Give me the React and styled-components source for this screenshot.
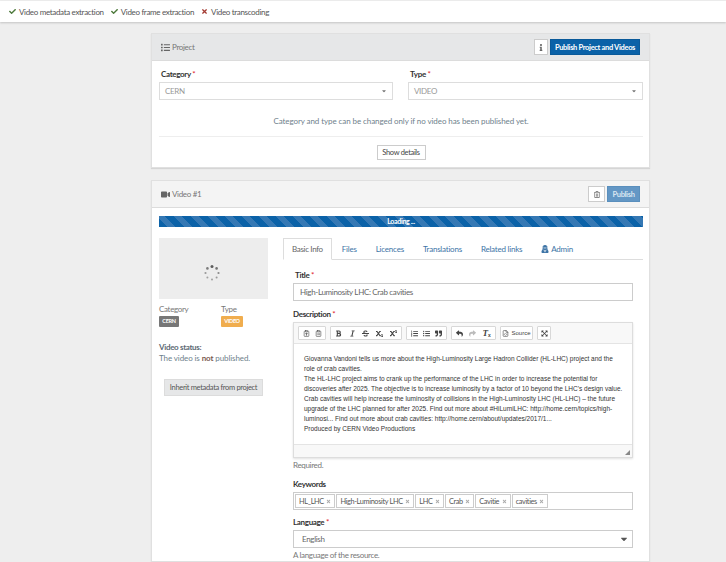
import styled, { createGlobalStyle } from "styled-components";
import {
  FaCheck,
  FaTimes,
  FaList,
  FaVideo,
  FaInfo,
  FaRegTrashAlt,
  FaUserSecret,
  FaCaretDown,
  FaBold,
  FaItalic,
  FaStrikethrough,
  FaSubscript,
  FaSuperscript,
  FaListOl,
  FaListUl,
  FaQuoteRight,
  FaReply,
  FaShare,
  FaExpandArrowsAlt,
} from "react-icons/fa";
import { ClipboardType, ClipboardList, FileCode } from "lucide-react";

const GlobalStyle = createGlobalStyle`
  html, body {
    margin: 0;
    height: 562px;
    overflow: hidden;
    background: #eeeeee;
    font-family: Lato, "Open Sans", sans-serif;
    font-size: 8px;
    letter-spacing: -0.33px;
    color: #555;
  }
  button {
    font-family: inherit;
    letter-spacing: inherit;
  }
`;

const TopBar = styled.div`
  margin-top: 1px;
  height: 21px;
  background: #fff;
  box-shadow: 0 1px 2px rgba(0, 0, 0, 0.18);
  display: flex;
  align-items: center;
  padding-left: 9px;
  gap: 7px;
`;

const Status = styled.span`
  display: inline-flex;
  align-items: center;
  gap: 3px;
  color: #555;
  svg {
    width: 7px;
    height: 7px;
    color: ${(p) => (p.$ok ? "#4d7a3c" : "#a33a32")};
  }
`;

const Page = styled.div`
  margin: 11px 0 0 151px;
  width: 499px;
  display: flex;
  flex-direction: column;
  gap: 12px;
`;

const Panel = styled.section`
  background: #fff;
  border: 1px solid #e0e0e0;
  box-shadow: 0 1px 1px rgba(0, 0, 0, 0.1);
`;

const PanelHead = styled.header`
  height: 26px;
  padding: 0 9px;
  background: ${(p) => (p.$light ? "#f4f4f4" : "#e6e7e8")};
  border-bottom: 1px solid #dcdcdc;
  display: flex;
  align-items: center;
  justify-content: space-between;
`;

const HeadTitle = styled.div`
  display: flex;
  align-items: center;
  gap: 2px;
  color: #777;
  svg {
    width: 9px;
    height: 9px;
    color: #666;
  }
`;

const HeadActions = styled.div`
  display: flex;
  align-items: center;
  gap: 2px;
`;

const IconButton = styled.button`
  width: ${(p) => p.$w}px;
  height: 16px;
  padding: 0;
  background: #fff;
  border: 1px solid #ccc;
  display: flex;
  align-items: center;
  justify-content: center;
  color: #666;
  svg {
    width: 6px;
    height: 7px;
  }
`;

const PrimaryButton = styled.button`
  width: ${(p) => p.$w}px;
  height: 16px;
  padding: 0;
  background: ${(p) => (p.$faded ? "#6397c5" : "#0b62a8")};
  border: 1px solid ${(p) => (p.$faded ? "#5a8fbd" : "#0a5a9a")};
  color: ${(p) => (p.$faded ? "#d9e6f1" : "#fff")};
  font-size: 7.5px;
  font-weight: 700;
  white-space: nowrap;
`;

const ProjectBody = styled.div`
  padding: 7px 6px 7px 7px;
`;

const FieldGrid = styled.div`
  display: grid;
  grid-template-columns: 234px 235px;
  column-gap: 15px;
`;

const Label = styled.label`
  display: block;
  font-weight: 700;
  line-height: 12px;
  color: #333;
  margin-bottom: 2px;
  padding-left: ${(p) => p.$indent || 0}px;
`;

const Star = styled.span`
  color: #e0202a;
  font-weight: 400;
`;

const FakeSelect = styled.div`
  height: 18px;
  box-sizing: border-box;
  border: 1px solid #ddd;
  padding: 0 5px;
  display: flex;
  align-items: center;
  justify-content: space-between;
  color: #999;
  background: #fff;
  svg {
    width: 6px;
    height: 6px;
    color: #777;
  }
`;

const Note = styled.p`
  margin: 15px 0 9px;
  text-align: center;
  color: #6f7f8c;
  letter-spacing: -0.08px;
  line-height: 12px;
`;

const Divider = styled.div`
  border-top: 1px solid #eee;
  padding-top: 8px;
  display: flex;
  justify-content: center;
`;

const OutlineButton = styled.button`
  width: 49px;
  height: 15px;
  padding: 0;
  background: #fff;
  border: 1px solid #ccc;
  color: #444;
  font-size: 7.5px;
`;

const VideoBody = styled.div`
  padding: 8px 6px 0 7px;
`;

const Loading = styled.div`
  height: 11px;
  background: repeating-linear-gradient(
    45deg,
    #0b62a8 0 6px,
    #3578b4 6px 12px
  );
  color: #fff;
  font-size: 7px;
  font-weight: 700;
  line-height: 11px;
  text-align: center;
`;

const Columns = styled.div`
  display: grid;
  grid-template-columns: 109px 360px;
  column-gap: 15px;
  margin-top: 11px;
`;

const Thumb = styled.div`
  height: 61px;
  box-sizing: border-box;
  padding: 8px 3px 0 0;
  background: #ededed;
  display: flex;
  align-items: center;
  justify-content: center;
`;

const MetaRow = styled.div`
  display: grid;
  grid-template-columns: 62px 1fr;
  margin-top: 5px;
  color: #777;
  line-height: 11px;
`;

const Badge = styled.span`
  display: inline-block;
  margin-top: 1px;
  width: ${(p) => p.$w}px;
  height: 11px;
  line-height: 11px;
  background: ${(p) => p.$color};
  color: #fff;
  font-size: 5.5px;
  font-weight: 700;
  text-align: center;
  border-radius: 1px;
`;

const StatusBlock = styled.div`
  margin-top: 15px;
  line-height: 11px;
  color: #777;
  strong {
    color: #5d6a75;
  }
`;

const StatusText = styled.div`
  color: #6e7f8b;
  letter-spacing: -0.1px;
  b {
    color: #7a5a50;
    font-weight: 700;
  }
`;

const GrayButton = styled.button`
  display: block;
  margin: 15px 0 0 5px;
  width: 99px;
  height: 17px;
  padding: 0;
  background: #e6e7e8;
  border: 1px solid #dcdcdc;
  color: #555;
  font-size: 7.5px;
  white-space: nowrap;
`;

const Tabs = styled.nav`
  display: flex;
  height: 22px;
  border-bottom: 1px solid #ddd;
  box-sizing: border-box;
`;

const Tab = styled.div`
  height: ${(p) => (p.$active ? "22px" : "21px")};
  box-sizing: border-box;
  padding: 0 8px;
  display: flex;
  align-items: center;
  gap: 2px;
  letter-spacing: ${(p) => (p.$active ? "-0.33px" : "-0.22px")};
  color: ${(p) => (p.$active ? "#666" : "#3d74a6")};
  background: #fff;
  margin-right: 1px;
  border: 1px solid ${(p) => (p.$active ? "#ddd" : "transparent")};
  border-bottom: ${(p) => (p.$active ? "1px solid #fff" : "none")};
  svg {
    width: 8px;
    height: 8px;
  }
`;

const Form = styled.div`
  padding: 9px 10px 0;
`;

const Field = styled.div`
  margin-bottom: ${(p) => p.$gap || 0}px;
`;

const TextInput = styled.div`
  height: 18px;
  box-sizing: border-box;
  border: 1px solid #ccc;
  padding: 0 6px;
  display: flex;
  align-items: center;
  color: #666;
`;

const Editor = styled.div`
  height: 136px;
  box-sizing: border-box;
  border: 1px solid #ddd;
  box-shadow: 0 1px 2px rgba(0, 0, 0, 0.12);
  display: flex;
  flex-direction: column;
  background: #f8f8f8;
`;

const Toolbar = styled.div`
  height: 21px;
  flex: none;
  box-sizing: border-box;
  padding: 3px 4px;
  display: flex;
  gap: 4px;
  border-bottom: 1px solid #e4e4e4;
`;

const ToolGroup = styled.div`
  width: ${(p) => p.$w}px;
  height: 14px;
  box-sizing: border-box;
  display: flex;
  align-items: center;
  justify-content: space-around;
  padding: 0 1px;
  border: 1px solid #d8d8d8;
  border-radius: 1px;
  background: #fff;
`;

const Tool = styled.span`
  display: inline-flex;
  align-items: center;
  justify-content: center;
  gap: 2px;
  font: 6px "Liberation Sans", Arial, sans-serif;
  letter-spacing: 0;
  color: #444;
  svg {
    width: 7px;
    height: 7px;
    color: ${(p) => (p.$off ? "#bbb" : "#444")};
  }
`;

const ClearFormat = styled.span`
  font: italic 700 9px/10px "Liberation Serif", serif;
  color: #444;
  sub {
    font: 700 5px/5px "Liberation Sans", sans-serif;
    vertical-align: -1px;
  }
`;

const EditorText = styled.div`
  flex: none;
  height: 101px;
  box-sizing: border-box;
  padding: 10px 8px 0 10px;
  background: #fff;
  border-bottom: 1px solid #e4e4e4;
  font: 6.5px/10px "Liberation Sans", Arial, sans-serif;
  letter-spacing: 0;
  color: #333;
`;

const EditorFoot = styled.div`
  flex: 1;
  position: relative;
`;

const Grip = styled.span`
  position: absolute;
  right: 2px;
  bottom: 2px;
  width: 0;
  height: 0;
  border-left: 5px solid transparent;
  border-bottom: 5px solid #888;
`;

const Help = styled.p`
  margin: 2px 0 0;
  line-height: 11px;
  color: #777;
`;

const TagBox = styled.div`
  height: 18px;
  box-sizing: border-box;
  border: 1px solid #ccc;
  padding: 1px;
  display: flex;
  gap: 1px;
`;

const Tag = styled.span`
  display: inline-flex;
  align-items: center;
  gap: 2.5px;
  height: 14px;
  box-sizing: border-box;
  padding: 0 3px;
  border: 1px solid #ccc;
  font-size: 7.3px;
  color: #555;
  white-space: nowrap;
  svg {
    width: 5px;
    height: 5px;
    color: #aaa;
  }
`;

const LanguageSelect = styled.div`
  height: 18px;
  box-sizing: border-box;
  border: 1px solid #ccc;
  padding: 0 3px 0 8px;
  display: flex;
  align-items: center;
  justify-content: space-between;
  color: #666;
  svg {
    width: 10px;
    height: 10px;
    color: #555;
  }
`;

const SPINNER_DOTS = [
  [0, -6.5, 1.5, 0.95],
  [4.6, -4.6, 1.3, 0.8],
  [6.5, 0, 1.1, 0.65],
  [4.6, 4.6, 1, 0.55],
  [0, 6.5, 1, 0.5],
  [-4.6, 4.6, 1, 0.5],
  [-6.5, 0, 1.1, 0.55],
  [-4.6, -4.6, 1.3, 0.75],
];

function Spinner() {
  return (
    <svg width="18" height="18" viewBox="-9 -9 18 18">
      {SPINNER_DOTS.map(([x, y, r, o]) => (
        <circle key={`${x}-${y}`} cx={x} cy={y} r={r} fill="#555" opacity={o} />
      ))}
    </svg>
  );
}

const KEYWORDS = ["HL_LHC", "High-Luminosity LHC", "LHC", "Crab", "Cavitie", "cavities"];

export default function App() {
  return (
    <>
      <GlobalStyle />
      <TopBar>
        <Status $ok>
          <FaCheck /> Video metadata extraction
        </Status>
        <Status $ok>
          <FaCheck /> Video frame extraction
        </Status>
        <Status>
          <FaTimes /> Video transcoding
        </Status>
      </TopBar>
      <Page>
        <Panel>
          <PanelHead>
            <HeadTitle>
              <FaList /> Project
            </HeadTitle>
            <HeadActions>
              <IconButton $w={14}>
                <FaInfo />
              </IconButton>
              <PrimaryButton $w={90}>Publish Project and Videos</PrimaryButton>
            </HeadActions>
          </PanelHead>
          <ProjectBody>
            <FieldGrid>
              <div>
                <Label $indent={2}>
                  Category <Star>*</Star>
                </Label>
                <FakeSelect>
                  CERN <FaCaretDown />
                </FakeSelect>
              </div>
              <div>
                <Label $indent={2}>
                  Type <Star>*</Star>
                </Label>
                <FakeSelect>
                  VIDEO <FaCaretDown />
                </FakeSelect>
              </div>
            </FieldGrid>
            <Note>Category and type can be changed only if no video has been published yet.</Note>
            <Divider>
              <OutlineButton>Show details</OutlineButton>
            </Divider>
          </ProjectBody>
        </Panel>
        <Panel>
          <PanelHead $light>
            <HeadTitle>
              <FaVideo /> Video #1
            </HeadTitle>
            <HeadActions>
              <IconButton $w={17}>
                <FaRegTrashAlt />
              </IconButton>
              <PrimaryButton $faded $w={33}>Publish</PrimaryButton>
            </HeadActions>
          </PanelHead>
          <VideoBody>
            <Loading>Loading ...</Loading>
            <Columns>
              <div>
                <Thumb>
                  <Spinner />
                </Thumb>
                <MetaRow>
                  <div>
                    Category
                    <br />
                    <Badge $color="#777" $w={20}>CERN</Badge>
                  </div>
                  <div>
                    Type
                    <br />
                    <Badge $color="#f0ad4e" $w={22}>VIDEO</Badge>
                  </div>
                </MetaRow>
                <StatusBlock>
                  <strong>Video status:</strong>
                  <StatusText>
                    The video is <b>not</b> published.
                  </StatusText>
                </StatusBlock>
                <GrayButton>Inherit metadata from project</GrayButton>
              </div>
              <div>
                <Tabs>
                  <Tab $active>Basic Info</Tab>
                  <Tab>Files</Tab>
                  <Tab>Licences</Tab>
                  <Tab>Translations</Tab>
                  <Tab>Related links</Tab>
                  <Tab>
                    <FaUserSecret /> Admin
                  </Tab>
                </Tabs>
                <Form>
                  <Field $gap={7}>
                    <Label $indent={2}>
                      Title <Star>*</Star>
                    </Label>
                    <TextInput>High-Luminosity LHC: Crab cavities</TextInput>
                  </Field>
                  <Field $gap={7}>
                    <Label>
                      Description <Star>*</Star>
                    </Label>
                    <Editor>
                      <Toolbar>
                        <ToolGroup $w={28}>
                          <Tool><ClipboardType /></Tool>
                          <Tool><ClipboardList /></Tool>
                        </ToolGroup>
                        <ToolGroup $w={72}>
                          <Tool><FaBold /></Tool>
                          <Tool><FaItalic /></Tool>
                          <Tool><FaStrikethrough /></Tool>
                          <Tool><FaSubscript /></Tool>
                          <Tool><FaSuperscript /></Tool>
                        </ToolGroup>
                        <ToolGroup $w={41}>
                          <Tool><FaListOl /></Tool>
                          <Tool><FaListUl /></Tool>
                          <Tool><FaQuoteRight /></Tool>
                        </ToolGroup>
                        <ToolGroup $w={45}>
                          <Tool><FaReply /></Tool>
                          <Tool $off><FaShare /></Tool>
                          <Tool><ClearFormat>T<sub>x</sub></ClearFormat></Tool>
                        </ToolGroup>
                        <ToolGroup $w={33}>
                          <Tool><FileCode /> Source</Tool>
                        </ToolGroup>
                        <ToolGroup $w={14}>
                          <Tool><FaExpandArrowsAlt /></Tool>
                        </ToolGroup>
                      </Toolbar>
                      <EditorText>
                        Giovanna Vandoni tells us more about the High-Luminosity Large Hadron Collider (HL-LHC) project and the role of crab cavities.
                        <br />
                        The HL-LHC project aims to crank up the performance of the LHC in order to increase the potential for discoveries after 2025. The objective is to increase luminosity by a factor of 10 beyond the LHC's design value. Crab cavities will help increase the luminosity of collisions in the High-Luminosity LHC (HL-LHC) – the future upgrade of the LHC planned for after 2025. Find out more about #HiLumiLHC: http://home.cern/topics/high-luminosi... Find out more about crab cavities: http://home.cern/about/updates/2017/1...
                        <br />
                        Produced by CERN Video Productions
                      </EditorText>
                      <EditorFoot>
                        <Grip />
                      </EditorFoot>
                    </Editor>
                    <Help>Required.</Help>
                  </Field>
                  <Field $gap={6}>
                    <Label>Keywords</Label>
                    <TagBox>
                      {KEYWORDS.map((k) => (
                        <Tag key={k}>
                          {k} <FaTimes />
                        </Tag>
                      ))}
                    </TagBox>
                  </Field>
                  <Field>
                    <Label>
                      Language <Star>*</Star>
                    </Label>
                    <LanguageSelect>
                      English <FaCaretDown />
                    </LanguageSelect>
                    <Help>A language of the resource.</Help>
                  </Field>
                </Form>
              </div>
            </Columns>
          </VideoBody>
        </Panel>
      </Page>
    </>
  );
}
